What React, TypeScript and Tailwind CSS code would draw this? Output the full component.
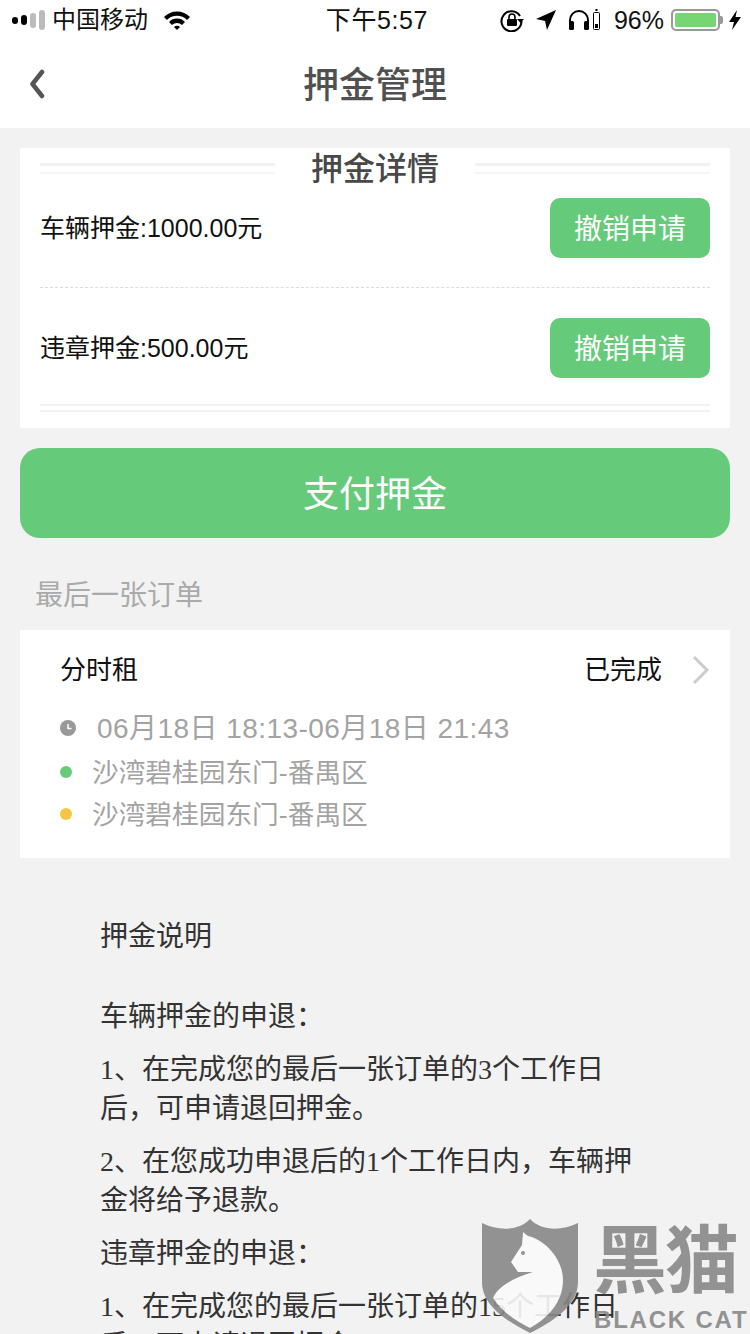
const sans = "font-['Liberation_Sans','Noto_Sans_CJK_SC',sans-serif]";

function StatusBar() {
	return (
		<div className="relative flex h-10 items-center bg-white pl-3 pr-[9px] text-[25px] text-[#111]">
			<div className="flex items-center gap-[3px]">
				<span className="h-[7px] w-[6px] rounded-[3px] bg-black" />
				<span className="h-[10px] w-[6px] rounded-[3px] bg-black" />
				<span className="h-[15px] w-[6px] rounded-[3px] bg-[#bbb]" />
				<span className="h-[20px] w-[6px] rounded-[3px] bg-[#bbb]" />
			</div>
			<span className="ml-[7px] text-[24px] leading-none">中国移动</span>
			<svg className="ml-[15px]" width="28" height="20" viewBox="0 0 28 20">
				<path d="M1 7 A18 18 0 0 1 27 7 L24 10 A14 14 0 0 0 4 10 Z" fill="#000" />
				<path d="M6 12 A11 11 0 0 1 22 12 L19 15 A7 7 0 0 0 9 15 Z" fill="#000" />
				<path d="M11 17 A4 4 0 0 1 17 17 L14 20 Z" fill="#000" />
			</svg>
			<span className="absolute left-[4px] right-0 text-center text-[25px] leading-none tracking-[0.6px]">下午5:57</span>
			<div className="ml-auto flex items-center">
				<svg width="24" height="24" viewBox="0 0 24 24" fill="none">
					<path d="M20 8 A10 10 0 1 0 21.5 13" stroke="#000" strokeWidth="2" />
					<path d="M17 11 L24 11 L20.5 15 Z" fill="#000" />
					<rect x="7" y="11" width="10" height="7" rx="1" fill="#000" />
					<path d="M9 11 V9 A3 3 0 0 1 15 9 V11" stroke="#000" strokeWidth="1.6" />
				</svg>
				<svg className="ml-[12px]" width="20" height="20" viewBox="0 0 20 20">
					<path d="M20 0 L11 20 L9 11 L0 9 Z" fill="#000" />
				</svg>
				<svg className="ml-[12px]" width="32" height="22" viewBox="0 0 32 22" fill="none">
					<path d="M2 15 V11 A9 9 0 0 1 20 11 V15" stroke="#000" strokeWidth="2" />
					<rect x="1" y="12" width="5" height="9" rx="1.5" fill="#000" />
					<rect x="16" y="12" width="5" height="9" rx="1.5" fill="#000" />
					<rect x="25.5" y="3.5" width="6" height="17" rx="1" stroke="#000" />
					<rect x="27" y="15" width="3" height="4" fill="#000" />
					<rect x="27.5" y="0" width="2" height="2" fill="#000" />
				</svg>
				<span className="ml-[14px] text-[25px] leading-none">96%</span>
				<div className="ml-[7px] flex items-center">
					<div className="h-[22px] w-[49px] rounded-[5px] border-2 border-[#999] p-[2px]">
						<div className="h-full w-full rounded-[2px] bg-[#76d672]" />
					</div>
					<span className="h-[8px] w-[3px] rounded-r-[2px] bg-[#999]" />
				</div>
				<svg className="ml-[6px]" width="12" height="20" viewBox="0 0 12 20">
					<path d="M8 0 L0 12 H5 L3 20 L12 7 H6.5 Z" fill="#000" />
				</svg>
			</div>
		</div>
	);
}

function NavBar() {
	return (
		<div className="relative flex h-[88px] items-center justify-center bg-white">
			<svg className="absolute left-[29px] top-[29px]" width="16" height="30" viewBox="0 0 16 30" fill="none">
				<path d="M13 3 L3.5 15 L13 27" stroke="#555" strokeWidth="4.5" strokeLinecap="round" strokeLinejoin="round" />
			</svg>
			<h1 className="mt-[4px] text-[36px] font-medium leading-none text-[#505050]">押金管理</h1>
		</div>
	);
}

function DepositRow({ label }: { label: string }) {
	return (
		<div className="flex h-[60px] items-center justify-between">
			<span className="text-[25px] leading-none text-[#111]">{label}</span>
			<button className="h-[60px] w-[160px] rounded-[10px] bg-[#65cb7b] pt-[3px] text-[28px] text-white">撤销申请</button>
		</div>
	);
}

function DoubleLine({ className }: { className: string }) {
	return (
		<div className={className}>
			<div className="h-[3px] bg-[#f1f1f1]" />
			<div className="mt-[6px] h-[2px] bg-[#f5f5f5]" />
		</div>
	);
}

function DepositCard() {
	return (
		<div className="mx-5 mt-5 h-[280px] bg-white px-5">
			<div className="flex h-[40px] items-center justify-between">
				<DoubleLine className="w-[235px]" />
				<span className="mt-[2px] text-[32px] font-medium leading-none text-[#484848]">押金详情</span>
				<DoubleLine className="w-[235px]" />
			</div>
			<div className="mt-[10px]">
				<DepositRow label="车辆押金:1000.00元" />
			</div>
			<div className="mt-[29px] border-t border-dashed border-[#ddd]" />
			<div className="mt-[30px]">
				<DepositRow label="违章押金:500.00元" />
			</div>
			<div className="mt-[26px] h-[8px] border-y-2 border-[#f1f1f1]" />
		</div>
	);
}

function OrderCard() {
	return (
		<div className="mx-5 mt-[18px] h-[228px] bg-white pl-10 pr-5">
			<div className="flex h-[80px] items-center">
				<span className="text-[26px] leading-none text-[#111]">分时租</span>
				<span className="ml-auto text-[26px] leading-none text-[#111]">已完成</span>
				<svg className="ml-[30px]" width="18" height="30" viewBox="0 0 18 30" fill="none">
					<path d="M2 2 L15 15 L2 28" stroke="#ccc" strokeWidth="3" />
				</svg>
			</div>
			<div className="flex h-[36px] items-center">
				<svg width="16" height="16" viewBox="0 0 16 16">
					<circle cx="8" cy="8" r="8" fill="#999" />
					<path d="M8 4 V8.5 H11.5" stroke="#fff" strokeWidth="1.5" fill="none" />
				</svg>
				<span className="ml-[21px] mt-[2px] text-[28px] leading-none tracking-[0.45px] text-[#a3a3a3]">06月18日 18:13-06月18日 21:43</span>
			</div>
			<div className="mt-[8px] flex h-[36px] items-center">
				<span className="h-[12px] w-[12px] rounded-full bg-[#65cb7b]" />
				<span className="ml-[20px] mt-[2px] text-[26.7px] leading-none text-[#a3a3a3]">沙湾碧桂园东门-番禺区</span>
			</div>
			<div className="mt-[6px] flex h-[36px] items-center">
				<span className="h-[12px] w-[12px] rounded-full bg-[#f6c544]" />
				<span className="ml-[20px] mt-[2px] text-[26.7px] leading-none text-[#a3a3a3]">沙湾碧桂园东门-番禺区</span>
			</div>
		</div>
	);
}

function Watermark() {
	return (
		<div className="absolute left-[480px] top-[1218px] h-[116px] w-[270px] opacity-90">
			<svg className="absolute left-0 top-0" width="100" height="116" viewBox="0 0 100 116">
				<path d="M2 5 C20 14 40 12 50 1 C60 12 80 14 98 5 V64 C98 88 72 104 50 115 C28 104 2 88 2 64 Z" fill="#888" />
				<path d="M43 14 L48 18 C66 22 83 42 83 62 C83 84 68 100 50 110 C36 103 22 94 13 80 C18 68 34 60 53 54 L38 54 L31 44 L42 27 Z" fill="#fafafa" />
				<circle cx="43" cy="35" r="2" fill="#888" />
			</svg>
			<div className="absolute left-[113px] top-[7px] text-[74px] font-bold leading-none tracking-[-2px] text-[#888]">黑猫</div>
			<div className="absolute left-[114px] top-[90px] whitespace-nowrap text-[24px] font-bold leading-none tracking-[1.8px] text-[#888]">BLACK CAT</div>
		</div>
	);
}

export default function App() {
	return (
		<div className={`relative h-[1334px] w-[750px] overflow-hidden bg-[#f2f2f2] ${sans}`}>
			<StatusBar />
			<NavBar />
			<DepositCard />
			<button className="mx-5 mt-5 block h-[90px] w-[710px] rounded-[20px] bg-[#65cb7b] pt-[4px] text-[36px] text-white">支付押金</button>
			<div className="ml-[35px] mt-[42px] text-[28px] leading-[32px] text-[#aaa]">最后一张订单</div>
			<OrderCard />
			<div className="ml-[100px] mt-[59px] font-['Liberation_Serif','Noto_Sans_CJK_SC',serif] text-[28px] leading-[39px] text-[#333]">
				<p>押金说明</p>
				<p className="mt-[41px]">车辆押金的申退：</p>
				<p className="mt-[14px]">1、在完成您的最后一张订单的3个工作日<br />后，可申请退回押金。</p>
				<p className="mt-[14px]">2、在您成功申退后的1个工作日内，车辆押<br />金将给予退款。</p>
				<p className="mt-[14px]">违章押金的申退：</p>
				<p className="mt-[14px]">1、在完成您的最后一张订单的15个工作日<br />后，可申请退回押金。</p>
			</div>
			<Watermark />
		</div>
	);
}
